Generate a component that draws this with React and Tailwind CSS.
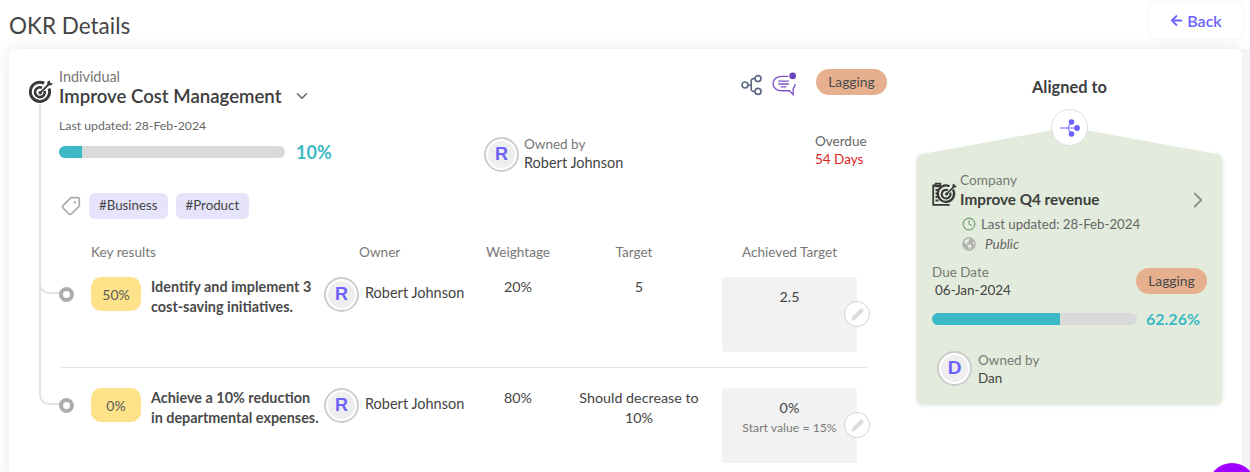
import React from 'react';
import { ChevronDown, ChevronRight, Clock, Pencil, Tag } from 'lucide-react';
import { FaArrowLeft, FaGlobeAmericas } from 'react-icons/fa';

const rowGrid = 'grid grid-cols-[233px_144px_100px_154px_135px] gap-x-0 pl-[82px]';

const keyResults = [
  { pct: '50%', title: ['Identify and implement 3', 'cost-saving initiatives.'], weight: '20%', target: ['5'], achieved: '2.5' },
  { pct: '0%', title: ['Achieve a 10% reduction', 'in departmental expenses.'], weight: '80%', target: ['Should decrease to', '10%'], achieved: '0%', start: 'Start value = 15%' },
];

const TargetIcon = ({ className }) => (
  <svg viewBox="0 0 24 24" className={className} fill="none" stroke="#3a3a3a">
    <path d="M20 8.6A9.6 9.6 0 1 1 15.2 3.2" strokeWidth="3" />
    <path d="M15.6 10.8a4.9 4.9 0 1 1-2.6-3" strokeWidth="2.6" />
    <circle cx="11.2" cy="12.8" r="1.3" fill="#3a3a3a" strokeWidth="1" />
    <path d="M11.2 12.8 20 4" strokeWidth="1.8" />
    <path d="M18.4 1.4 18.2 5.4l4-.2 1.8-2-2.8-.2-.2-2.6z" fill="#3a3a3a" stroke="none" />
  </svg>
);

const CompanyIcon = ({ className }) => (
  <svg viewBox="0 0 26 24" className={className} fill="none" stroke="#383838">
    <path d="M9 3.5H1.2v19.3h16.5" strokeWidth="1.8" />
    <path d="M3.5 3.5V1.5h5v3h-5z" strokeWidth="1.5" />
    <path d="M3.5 8h2.5M3.5 11.5h2M3.5 15h2M3.5 18.5h3" strokeWidth="1.8" />
    <path d="M21 7.5a8.2 8.2 0 1 1-3.5-3.2" strokeWidth="2.3" />
    <path d="M18.2 10.6a4.4 4.4 0 1 1-2.2-2.4" strokeWidth="2.1" />
    <circle cx="14.6" cy="12" r="1.2" fill="#383838" strokeWidth="0.8" />
    <path d="M14.6 12 22 4.6" strokeWidth="1.6" />
    <path d="M20.6 2.6 20.4 5.6l3-.2 1.6-1.6-2.4-.2-.2-2z" fill="#383838" stroke="none" />
  </svg>
);

const ShareIcon = ({ className }) => (
  <svg viewBox="0 0 22 22" className={className} fill="none" stroke="#5f6b85" strokeWidth="1.7">
    <circle cx="4" cy="11" r="3" />
    <circle cx="17" cy="4.6" r="3" />
    <circle cx="17" cy="17.4" r="3" />
    <path d="M7 11h3.2M14 4.6h-1.6a2.2 2.2 0 0 0-2.2 2.2v8.4a2.2 2.2 0 0 0 2.2 2.2H14" />
  </svg>
);

const ChatIcon = ({ className }) => (
  <svg viewBox="0 0 26 26" className={className} fill="none">
    <path d="M17 4.5H10C5 4.5 1 7.7 1 12s4 7.5 9 7.5h8.2l3.8 4v-6c1.2-1.3 2-3 2-5" stroke="#7b52c9" strokeWidth="1.4" />
    <path d="M6.5 9.5h11M6.5 12.5h11M9 15.5h6" stroke="#7b52c9" strokeWidth="1.4" />
    <circle cx="21.5" cy="4" r="3.5" fill="#6a45bd" />
  </svg>
);

const AlignIcon = ({ className }) => (
  <svg viewBox="0 0 20 18" className={className} fill="#6c63ff">
    <circle cx="11.5" cy="3" r="2.8" />
    <circle cx="17" cy="9" r="2.9" />
    <circle cx="11.5" cy="15" r="2.8" />
    <path d="M0 9h14" stroke="#6c63ff" strokeWidth="1" />
    <path d="M11.5 3 7.5 9l4 6" stroke="#6c63ff" strokeWidth="1" fill="none" />
  </svg>
);

const Avatar = ({ letter, size = 'w-[35px] h-[35px]', text = 'text-[18px]' }) => (
  <div className={`${size} shrink-0 rounded-full border-2 border-[#cdcdcd] bg-white flex items-center justify-center`}>
    <div className={`w-[27px] h-[27px] rounded-full bg-[#eeeeee] flex items-center justify-center text-[#6c63ff] font-bold ${text} font-['Liberation_Sans',sans-serif]`}>
      {letter}
    </div>
  </div>
);

const Progress = ({ width, pct }) => (
  <div className={`${width} h-3 rounded-full bg-[#d9d9d9] overflow-hidden`}>
    <div className="h-full bg-[#3bb9c6]" style={{ width: pct }} />
  </div>
);

const Lagging = () => (
  <span className="w-[71px] h-[26px] rounded-full bg-[#e6b08f] text-[13.8px] text-[#4a4a4a] flex items-center justify-center">Lagging</span>
);

const KeyResultRow = ({ kr, elbow }) => (
  <div className={`${rowGrid} relative h-[75px] text-[14.3px] text-[#444444]`}>
    <div className={`absolute left-[30px] bottom-[58px] w-[20px] border-l-2 border-b-2 border-[#e2e2e2] rounded-bl-[10px] ${elbow}`} />
    <div className="absolute left-[50px] top-[10px] w-[15px] h-[15px] rounded-full border-[4px] border-[#adadad] bg-white" />
    <div className="flex">
      <div className="w-[50px] h-[34px] rounded-[10px] bg-[#fde28a] text-[#5a5a5a] text-[14px] flex items-center justify-center">{kr.pct}</div>
      <div className="ml-[10px] font-bold text-[14.4px] leading-[20px] whitespace-nowrap text-[#4a4a4a]">
        {kr.title.map(line => <div key={line}>{line}</div>)}
      </div>
    </div>
    <div className="flex items-start">
      <Avatar letter="R" />
      <span className="ml-[6px] text-[14.5px] leading-[32px] whitespace-nowrap">Robert Johnson</span>
    </div>
    <div className="text-center leading-[20px]">{kr.weight}</div>
    <div className="text-center leading-[20px] pr-[12px]">
      {kr.target.map(line => <div key={line}>{line}</div>)}
    </div>
    <div className="relative rounded bg-[#f2f2f2] text-center pt-[10px] leading-[20px]">
      <div>{kr.achieved}</div>
      {kr.start && <div className="text-[12.25px] leading-[19px] text-[#7a7a7a] whitespace-nowrap">{kr.start}</div>}
      <button className="absolute left-[122px] top-[24px] w-[26px] h-[26px] rounded-full border border-[#d4d4d4] bg-white flex items-center justify-center">
        <Pencil size={13} className="text-[#dcdcdc]" fill="#dcdcdc" />
      </button>
    </div>
  </div>
);

export default function App() {
  return (
    <div className="relative w-[1250px] h-[472px] overflow-hidden bg-white font-['Lato',sans-serif] text-[#444444]">
      <div className="h-[49px] flex items-start justify-between pl-[9px] pr-[8px]">
        <h1 className="text-[22.5px] leading-[26px] mt-[13px] text-[#444444]">OKR Details</h1>
        <button className="mt-[3px] w-[92px] h-[35px] rounded-md bg-white shadow-[0_0_6px_rgba(0,0,0,0.07)] flex items-center justify-center gap-[4px] text-[16px] font-semibold text-[#6c63ff]">
          <FaArrowLeft size={13} />
          Back
        </button>
      </div>

      <div className="ml-[9px] w-[1233px] h-[440px] rounded-md bg-white shadow-[0_0_16px_rgba(0,0,0,0.1)] flex">
        <div className="relative w-[890px] shrink-0 pt-[20px]">
          <div className="relative pl-[50px] h-[40px]">
            <TargetIcon className="absolute left-[20px] top-[11px] w-[24px] h-[24px]" />
            <div className="text-[14.4px] leading-[16px] text-[#777777]">Individual</div>
            <div className="flex items-center -mt-px">
              <span className="text-[18.6px] leading-[24px] font-semibold text-[#3d3d3d]">Improve Cost Management</span>
              <ChevronDown size={18} className="ml-[12px] text-[#666666]" />
            </div>
            <div className="absolute left-[732px] top-[3px] flex items-center gap-[9px]">
              <ShareIcon className="w-[22px] h-[22px]" />
              <ChatIcon className="w-[25px] h-[25px]" />
              <div className="ml-[10px] -mt-[5px]"><Lagging /></div>
            </div>
          </div>

          <div className="pl-[50px] flex mt-[10px]">
            <div className="w-[425px]">
              <div className="text-[12.25px] leading-[14px] text-[#666666]">Last updated: 28-Feb-2024</div>
              <div className="flex items-center mt-[7px]">
                <Progress width="w-[226px]" pct="10%" />
                <span className="ml-[11px] text-[18px] leading-[24px] font-bold text-[#3bb9c6]">10%</span>
              </div>
            </div>
            <div className="flex items-start mt-[18px] w-[331px]">
              <Avatar letter="R" />
              <div className="ml-[5px] -mt-[2px] text-[14.5px] leading-[18px]">
                <div className="text-[#777777] text-[13.5px]">Owned by</div>
                <div className="mt-px">Robert Johnson</div>
              </div>
            </div>
            <div className="mt-[13px] text-[13.5px] leading-[18px]">
              <div className="text-[#666666]">Overdue</div>
              <div className="text-[#e2231a]">54 Days</div>
            </div>
          </div>

          <div className="flex items-center pl-[50px] mt-[21px]">
            <Tag size={20} className="ml-[2px] text-[#a8a8a8] -scale-x-100" />
            <span className="ml-[8px] h-[26px] px-[10px] rounded-md bg-[#e6e4fa] text-[13.3px] flex items-center">#Business</span>
            <span className="ml-[8px] h-[26px] px-[10px] rounded-md bg-[#e6e4fa] text-[13.3px] flex items-center">#Product</span>
          </div>

          <div className={`${rowGrid} mt-[24px] h-[18px] text-[13.6px] leading-[18px] text-[#777777]`}>
            <div>Key results</div>
            <div className="pl-[35px]">Owner</div>
            <div className="text-center">Weightage</div>
            <div className="text-center pr-[22px]">Target</div>
            <div className="text-center whitespace-nowrap">Achieved Target</div>
          </div>

          <div className="mt-[16px]">
            <KeyResultRow kr={keyResults[0]} elbow="h-[189px]" />
            <div className="ml-[52px] mr-[32px] mt-[15px] mb-[20px] border-t border-[#e4e4e4]" />
            <KeyResultRow kr={keyResults[1]} elbow="h-[300px]" />
          </div>
        </div>

        <div className="relative pt-[28px] pl-[18px] w-[323px] shrink-0">
          <div className="text-center text-[16.4px] leading-[20px] font-bold text-[#3d3d3d]">Aligned to</div>
          <div className="relative mt-[30px] h-[28px]">
            <svg viewBox="0 0 305 28" preserveAspectRatio="none" className="block w-full h-[28px]">
              <path d="M0 28 152.5 0 305 28z" fill="#e3ecdc" />
            </svg>
            <div className="absolute left-[134px] -top-[18px] w-[37px] h-[37px] rounded-full bg-white border border-[#dedede] flex items-center justify-center">
              <AlignIcon className="w-[20px] h-[18px]" />
            </div>
          </div>
          <div className="-mt-px h-[250px] rounded-b-md rounded-t-[6px] bg-[#e3ecdc] shadow-[0_1px_4px_rgba(0,0,0,0.15)] px-[15px] pt-[18px]">
            <div className="flex items-start relative">
              <CompanyIcon className="w-[26px] h-[24px] mt-[10px] shrink-0" />
              <div className="ml-[2px]">
                <div className="text-[13.7px] leading-[16px] text-[#777777]">Company</div>
                <div className="text-[15.3px] leading-[22px] font-bold text-[#3d3d3d]">Improve Q4 revenue</div>
              </div>
              <ChevronRight size={26} strokeWidth={1.8} className="absolute left-[253px] top-[15px] text-[#909090]" />
            </div>
            <div className="flex items-center ml-[30px] mt-[4px] text-[13.25px] leading-[20px] text-[#666666]">
              <Clock size={14} className="text-[#6fa36f]" />
              <span className="ml-[5px]">Last updated: 28-Feb-2024</span>
            </div>
            <div className="flex items-center ml-[30px] text-[13.5px] leading-[20px] text-[#666666]">
              <FaGlobeAmericas size={14} className="text-[#b0b0b0]" />
              <span className="ml-[9px] italic">Public</span>
            </div>
            <div className="flex items-center justify-between mt-[9px] pr-0">
              <div className="text-[13.5px] leading-[18px]">
                <div className="text-[#777777]">Due Date</div>
                <div className="ml-[3px]">06-Jan-2024</div>
              </div>
              <Lagging />
            </div>
            <div className="flex items-center mt-[10px]">
              <Progress width="w-[205px]" pct="62.26%" />
              <span className="ml-[9px] text-[16px] leading-[20px] font-bold text-[#3bb9c6]">62.26%</span>
            </div>
            <div className="flex items-start mt-[22px] ml-[5px]">
              <Avatar letter="D" text="text-[19px]" />
              <div className="ml-[6px] text-[13.5px] leading-[18px]">
                <div className="text-[#777777]">Owned by</div>
                <div>Dan</div>
              </div>
            </div>
          </div>
        </div>
      </div>

      <div className="absolute right-0 top-[49px] bottom-0 w-[8px] bg-[#f3f3f3]" />
      <div className="absolute left-[1208px] top-[463px] w-[48px] h-[48px] rounded-full bg-[#a000ff]" />
    </div>
  );
}
